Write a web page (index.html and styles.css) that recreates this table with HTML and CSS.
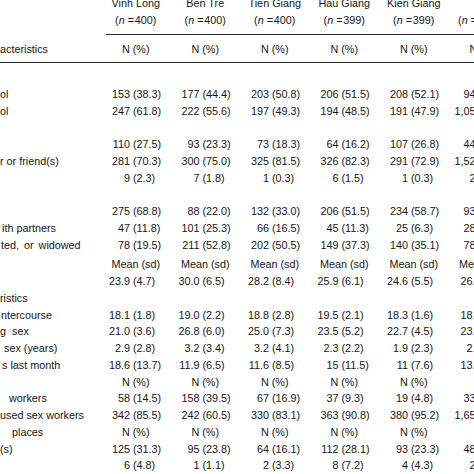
FILE: index.html
```html
<!DOCTYPE html>
<html lang="en">
<head>
<meta charset="utf-8">
<title>Table</title>
<link rel="stylesheet" href="styles.css">
</head>
<body>
<div class="table">
  <div class="head">
    <div class="row ha">
      <div></div>
      <div class="m">Vinh Long</div><div class="m">Ben Tre</div><div class="m">Tien Giang</div><div class="m">Hau Giang</div><div class="m">Kien Giang</div><div class="m">Total</div>
    </div>
    <div class="row hb">
      <div></div>
      <div class="m">(<i>n</i> =&#8202;400)</div><div class="m">(<i>n</i> =&#8202;400)</div><div class="m">(<i>n</i> =&#8202;400)</div><div class="m">(<i>n</i> =&#8202;399)</div><div class="m">(<i>n</i> =&#8202;399)</div><div class="m">(<i>n</i> =&#8202;1,998)</div>
    </div>
    <div class="rule span"></div>
    <div class="row hc">
      <div class="lbl">acteristics</div>
      <div class="m">N (%)</div><div class="m">N (%)</div><div class="m">N (%)</div><div class="m">N (%)</div><div class="m">N (%)</div><div class="m">N (%)</div>
    </div>
    <div class="rule full"></div>
  </div>

  <div class="body">
    <div class="row"><div class="lbl"></div></div>
    <div class="row">
      <div class="lbl">ol</div>
      <div class="n"><span class="v">153</span><span class="p">(38.3)</span></div>
      <div class="n"><span class="v">177</span><span class="p">(44.4)</span></div>
      <div class="n"><span class="v">203</span><span class="p">(50.8)</span></div>
      <div class="n"><span class="v">206</span><span class="p">(51.5)</span></div>
      <div class="n"><span class="v">208</span><span class="p">(52.1)</span></div>
      <div class="n t"><span class="v">947</span><span class="p">(47.4)</span></div>
    </div>
    <div class="row">
      <div class="lbl">ol</div>
      <div class="n"><span class="v">247</span><span class="p">(61.8)</span></div>
      <div class="n"><span class="v">222</span><span class="p">(55.6)</span></div>
      <div class="n"><span class="v">197</span><span class="p">(49.3)</span></div>
      <div class="n"><span class="v">194</span><span class="p">(48.5)</span></div>
      <div class="n"><span class="v">191</span><span class="p">(47.9)</span></div>
      <div class="n t"><span class="v">1,051</span><span class="p">(52.6)</span></div>
    </div>
    <div class="row"><div class="lbl"></div></div>
    <div class="row">
      <div class="lbl"></div>
      <div class="n"><span class="v">110</span><span class="p">(27.5)</span></div>
      <div class="n"><span class="v">93</span><span class="p">(23.3)</span></div>
      <div class="n"><span class="v">73</span><span class="p">(18.3)</span></div>
      <div class="n"><span class="v">64</span><span class="p">(16.2)</span></div>
      <div class="n"><span class="v">107</span><span class="p">(26.8)</span></div>
      <div class="n t"><span class="v">447</span><span class="p">(22.4)</span></div>
    </div>
    <div class="row">
      <div class="lbl">r or friend(s)</div>
      <div class="n"><span class="v">281</span><span class="p">(70.3)</span></div>
      <div class="n"><span class="v">300</span><span class="p">(75.0)</span></div>
      <div class="n"><span class="v">325</span><span class="p">(81.5)</span></div>
      <div class="n"><span class="v">326</span><span class="p">(82.3)</span></div>
      <div class="n"><span class="v">291</span><span class="p">(72.9)</span></div>
      <div class="n t"><span class="v">1,523</span><span class="p">(76.2)</span></div>
    </div>
    <div class="row">
      <div class="lbl"></div>
      <div class="n"><span class="v">9</span><span class="p">(2.3)</span></div>
      <div class="n"><span class="v">7</span><span class="p">(1.8)</span></div>
      <div class="n"><span class="v">1</span><span class="p">(0.3)</span></div>
      <div class="n"><span class="v">6</span><span class="p">(1.5)</span></div>
      <div class="n"><span class="v">1</span><span class="p">(0.3)</span></div>
      <div class="n t"><span class="v">24</span><span class="p">(1.2)</span></div>
    </div>
    <div class="row"><div class="lbl"></div></div>
    <div class="row">
      <div class="lbl"></div>
      <div class="n"><span class="v">275</span><span class="p">(68.8)</span></div>
      <div class="n"><span class="v">88</span><span class="p">(22.0)</span></div>
      <div class="n"><span class="v">132</span><span class="p">(33.0)</span></div>
      <div class="n"><span class="v">206</span><span class="p">(51.5)</span></div>
      <div class="n"><span class="v">234</span><span class="p">(58.7)</span></div>
      <div class="n t"><span class="v">935</span><span class="p">(46.8)</span></div>
    </div>
    <div class="row">
      <div class="lbl x2">ith partners</div>
      <div class="n"><span class="v">47</span><span class="p">(11.8)</span></div>
      <div class="n"><span class="v">101</span><span class="p">(25.3)</span></div>
      <div class="n"><span class="v">66</span><span class="p">(16.5)</span></div>
      <div class="n"><span class="v">45</span><span class="p">(11.3)</span></div>
      <div class="n"><span class="v">25</span><span class="p">(6.3)</span></div>
      <div class="n t"><span class="v">284</span><span class="p">(14.2)</span></div>
    </div>
    <div class="row">
      <div class="lbl x1 ws2">ted, or widowed</div>
      <div class="n"><span class="v">78</span><span class="p">(19.5)</span></div>
      <div class="n"><span class="v">211</span><span class="p">(52.8)</span></div>
      <div class="n"><span class="v">202</span><span class="p">(50.5)</span></div>
      <div class="n"><span class="v">149</span><span class="p">(37.3)</span></div>
      <div class="n"><span class="v">140</span><span class="p">(35.1)</span></div>
      <div class="n t"><span class="v">780</span><span class="p">(39.0)</span></div>
    </div>
    <div class="row mean">
      <div class="lbl"></div>
      <div class="m">Mean (sd)</div><div class="m">Mean (sd)</div><div class="m">Mean (sd)</div><div class="m">Mean (sd)</div><div class="m">Mean (sd)</div><div class="m">Mean (sd)</div>
    </div>
    <div class="row">
      <div class="lbl"></div>
      <div class="n"><span class="v">23.9</span><span class="p">(4.7)</span></div>
      <div class="n"><span class="v">30.0</span><span class="p">(6.5)</span></div>
      <div class="n"><span class="v">28.2</span><span class="p">(8.4)</span></div>
      <div class="n"><span class="v">25.9</span><span class="p">(6.1)</span></div>
      <div class="n"><span class="v">24.6</span><span class="p">(5.5)</span></div>
      <div class="n t"><span class="v">26.5</span><span class="p">(6.6)</span></div>
    </div>
    <div class="row"><div class="lbl">ristics</div></div>
    <div class="row">
      <div class="lbl x1">ntercourse</div>
      <div class="n"><span class="v">18.1</span><span class="p">(1.8)</span></div>
      <div class="n"><span class="v">19.0</span><span class="p">(2.2)</span></div>
      <div class="n"><span class="v">18.8</span><span class="p">(2.8)</span></div>
      <div class="n"><span class="v">19.5</span><span class="p">(2.1)</span></div>
      <div class="n"><span class="v">18.3</span><span class="p">(1.6)</span></div>
      <div class="n t"><span class="v">18.8</span><span class="p">(2.1)</span></div>
    </div>
    <div class="row">
      <div class="lbl ws3">g sex</div>
      <div class="n"><span class="v">21.0</span><span class="p">(3.6)</span></div>
      <div class="n"><span class="v">26.8</span><span class="p">(6.0)</span></div>
      <div class="n"><span class="v">25.0</span><span class="p">(7.3)</span></div>
      <div class="n"><span class="v">23.5</span><span class="p">(5.2)</span></div>
      <div class="n"><span class="v">22.7</span><span class="p">(4.5)</span></div>
      <div class="n t"><span class="v">23.8</span><span class="p">(5.9)</span></div>
    </div>
    <div class="row">
      <div class="lbl x4">sex (years)</div>
      <div class="n"><span class="v">2.9</span><span class="p">(2.8)</span></div>
      <div class="n"><span class="v">3.2</span><span class="p">(3.4)</span></div>
      <div class="n"><span class="v">3.2</span><span class="p">(4.1)</span></div>
      <div class="n"><span class="v">2.3</span><span class="p">(2.2)</span></div>
      <div class="n"><span class="v">1.9</span><span class="p">(2.3)</span></div>
      <div class="n t"><span class="v">2.7</span><span class="p">(3.2)</span></div>
    </div>
    <div class="row">
      <div class="lbl x2">s last month</div>
      <div class="n"><span class="v">18.6</span><span class="p">(13.7)</span></div>
      <div class="n"><span class="v">11.9</span><span class="p">(6.5)</span></div>
      <div class="n"><span class="v">11.6</span><span class="p">(8.5)</span></div>
      <div class="n"><span class="v">15</span><span class="p">(11.5)</span></div>
      <div class="n"><span class="v">11</span><span class="p">(7.6)</span></div>
      <div class="n t"><span class="v">13.6</span><span class="p">(10.4)</span></div>
    </div>
    <div class="row">
      <div class="lbl"></div>
      <div class="m">N (%)</div><div class="m">N (%)</div><div class="m">N (%)</div><div class="m">N (%)</div><div class="m">N (%)</div>
    </div>
    <div class="row">
      <div class="lbl x9">workers</div>
      <div class="n"><span class="v">58</span><span class="p">(14.5)</span></div>
      <div class="n"><span class="v">158</span><span class="p">(39.5)</span></div>
      <div class="n"><span class="v">67</span><span class="p">(16.9)</span></div>
      <div class="n"><span class="v">37</span><span class="p">(9.3)</span></div>
      <div class="n"><span class="v">19</span><span class="p">(4.8)</span></div>
      <div class="n t"><span class="v">339</span><span class="p">(17.0)</span></div>
    </div>
    <div class="row">
      <div class="lbl">used sex workers</div>
      <div class="n"><span class="v">342</span><span class="p">(85.5)</span></div>
      <div class="n"><span class="v">242</span><span class="p">(60.5)</span></div>
      <div class="n"><span class="v">330</span><span class="p">(83.1)</span></div>
      <div class="n"><span class="v">363</span><span class="p">(90.8)</span></div>
      <div class="n"><span class="v">380</span><span class="p">(95.2)</span></div>
      <div class="n t"><span class="v">1,657</span><span class="p">(83.0)</span></div>
    </div>
    <div class="row">
      <div class="lbl x12">places</div>
      <div class="m">N (%)</div><div class="m">N (%)</div><div class="m">N (%)</div><div class="m">N (%)</div><div class="m">N (%)</div>
    </div>
    <div class="row">
      <div class="lbl">(s)</div>
      <div class="n"><span class="v">125</span><span class="p">(31.3)</span></div>
      <div class="n"><span class="v">95</span><span class="p">(23.8)</span></div>
      <div class="n"><span class="v">64</span><span class="p">(16.1)</span></div>
      <div class="n"><span class="v">112</span><span class="p">(28.1)</span></div>
      <div class="n"><span class="v">93</span><span class="p">(23.3)</span></div>
      <div class="n t"><span class="v">489</span><span class="p">(24.5)</span></div>
    </div>
    <div class="row">
      <div class="lbl"></div>
      <div class="n"><span class="v">6</span><span class="p">(4.8)</span></div>
      <div class="n"><span class="v">1</span><span class="p">(1.1)</span></div>
      <div class="n"><span class="v">2</span><span class="p">(3.3)</span></div>
      <div class="n"><span class="v">8</span><span class="p">(7.2)</span></div>
      <div class="n"><span class="v">4</span><span class="p">(4.3)</span></div>
      <div class="n t"><span class="v">21</span><span class="p">(4.3)</span></div>
    </div>
  </div>
</div>
</body>
</html>
```

FILE: styles.css
```css
html, body {
  margin: 0;
  padding: 0;
  background: #ffffff;
  overflow: hidden;
}

body {
  width: 474px;
  height: 474px;
  font-family: "Liberation Sans", Arial, Helvetica, sans-serif;
  font-size: 10.8px;
  color: #171717;
}

.table {
  width: 518px;
}

.row {
  display: grid;
  grid-template-columns: 101px repeat(6, 69.5px);
  height: 16.75px;
  line-height: 16.75px;
  white-space: nowrap;
}

.ha {
  height: 6px;
  line-height: 6px;
}

.hb {
  margin-top: 6px;
  height: 17px;
  line-height: 17px;
}

.hc {
  margin-top: 6px;
  height: 17px;
  line-height: 17px;
}

.rule {
  height: 0;
  border-top: 1px solid #2a2a2a;
}

.rule.span {
  margin-top: 5px;
  margin-left: 106px;
}

.rule.full {
  margin-top: 4px;
}

.body {
  padding-top: 6px;
}

.row.mean {
  margin-top: 3px;
}

.m {
  text-align: center;
}

.m i {
  font-style: italic;
}

.lbl {
  text-align: left;
  overflow: hidden;
}

.x1 { padding-left: 1px; }
.x2 { padding-left: 2px; }
.x4 { padding-left: 4px; }
.x9 { padding-left: 9px; }
.x12 { padding-left: 12px; }
.ws2 { word-spacing: 2px; }
.ws3 { word-spacing: 3px; }

.n {
  display: flex;
}

.n .v {
  flex: none;
  width: 29px;
  text-align: right;
}

.n.t .v {
  width: 33px;
}

.n .p {
  margin-left: 3px;
}
```
